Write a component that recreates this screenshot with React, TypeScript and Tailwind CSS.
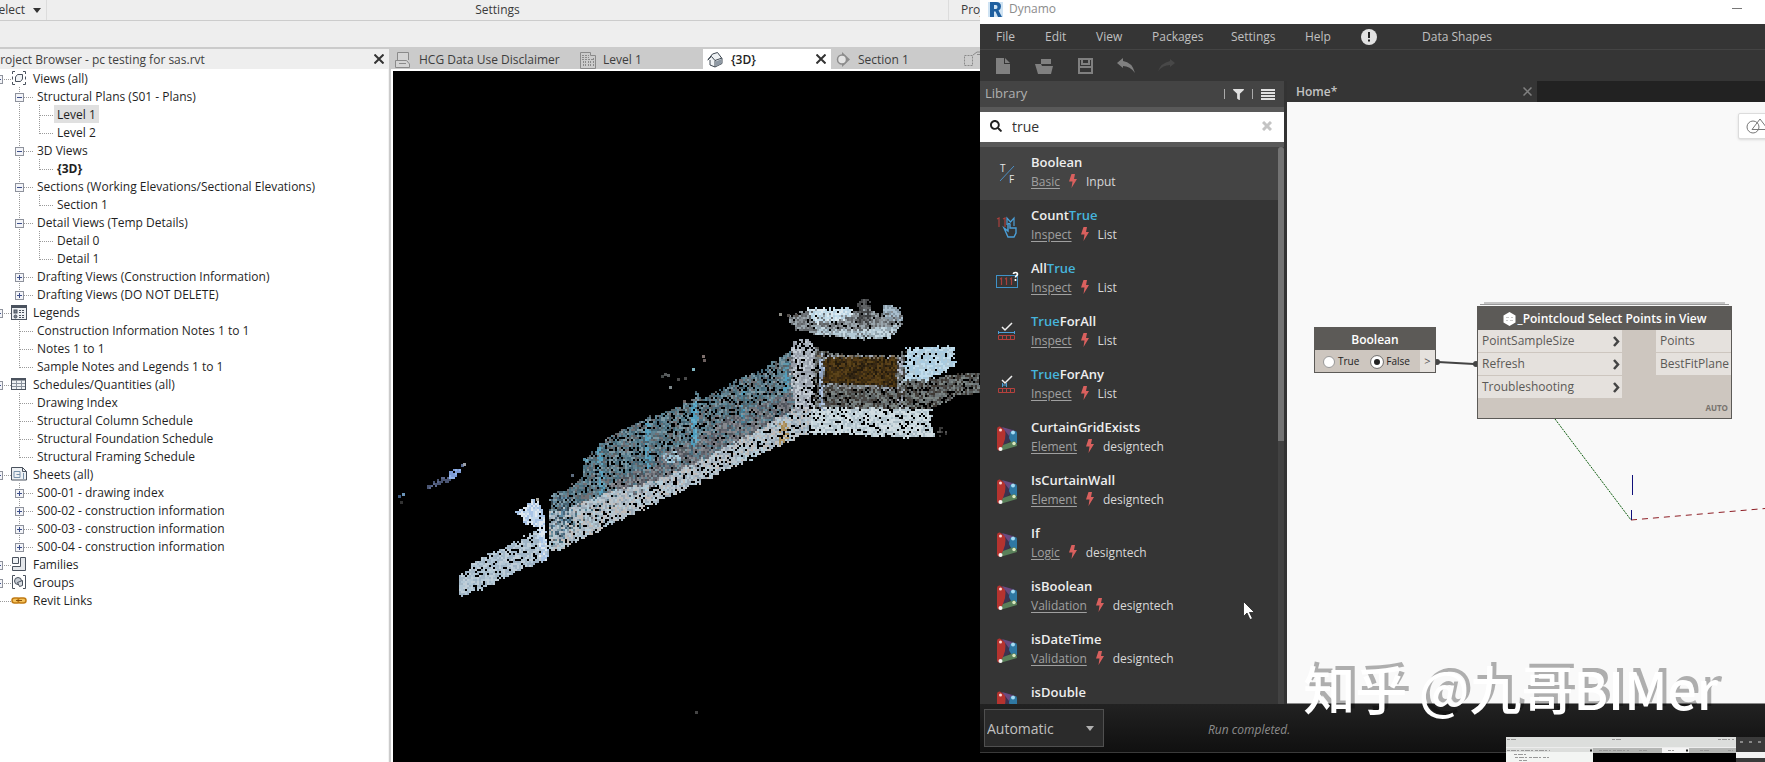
import React, { useMemo, useState } from 'react';
import { FaFilter, FaSearch } from 'react-icons/fa';

type Expander = 'open' | 'closed' | 'none';

interface TreeRow {
    label: string;
    level: 0 | 1 | 2;
    expander: Expander;
    icon?: 'views' | 'legends' | 'schedules' | 'sheets' | 'families' | 'groups' | 'links';
    bold?: boolean;
    last?: boolean;
    trunk?: boolean;
}

const treeRows: TreeRow[] = [
    { label: 'Views (all)', level: 0, expander: 'open', icon: 'views' },
    { label: 'Structural Plans (S01 - Plans)', level: 1, expander: 'open' },
    { label: 'Level 1', level: 2, expander: 'none', trunk: true },
    { label: 'Level 2', level: 2, expander: 'none', trunk: true, last: true },
    { label: '3D Views', level: 1, expander: 'open' },
    { label: '{3D}', level: 2, expander: 'none', trunk: true, last: true, bold: true },
    { label: 'Sections (Working Elevations/Sectional Elevations)', level: 1, expander: 'open' },
    { label: 'Section 1', level: 2, expander: 'none', trunk: true, last: true },
    { label: 'Detail Views (Temp Details)', level: 1, expander: 'open' },
    { label: 'Detail 0', level: 2, expander: 'none', trunk: true },
    { label: 'Detail 1', level: 2, expander: 'none', trunk: true, last: true },
    { label: 'Drafting Views (Construction Information)', level: 1, expander: 'closed' },
    { label: 'Drafting Views (DO NOT DELETE)', level: 1, expander: 'closed', last: true },
    { label: 'Legends', level: 0, expander: 'open', icon: 'legends' },
    { label: 'Construction Information Notes 1 to 1', level: 1, expander: 'none' },
    { label: 'Notes 1 to 1', level: 1, expander: 'none' },
    { label: 'Sample Notes and Legends 1 to 1', level: 1, expander: 'none', last: true },
    { label: 'Schedules/Quantities (all)', level: 0, expander: 'open', icon: 'schedules' },
    { label: 'Drawing Index', level: 1, expander: 'none' },
    { label: 'Structural Column Schedule', level: 1, expander: 'none' },
    { label: 'Structural Foundation Schedule', level: 1, expander: 'none' },
    { label: 'Structural Framing Schedule', level: 1, expander: 'none', last: true },
    { label: 'Sheets (all)', level: 0, expander: 'open', icon: 'sheets' },
    { label: 'S00-01 - drawing index', level: 1, expander: 'closed' },
    { label: 'S00-02 - construction information', level: 1, expander: 'closed' },
    { label: 'S00-03 - construction information', level: 1, expander: 'closed' },
    { label: 'S00-04 - construction information', level: 1, expander: 'closed', last: true },
    { label: 'Families', level: 0, expander: 'closed', icon: 'families' },
    { label: 'Groups', level: 0, expander: 'closed', icon: 'groups' },
    { label: 'Revit Links', level: 0, expander: 'none', icon: 'links' },
];

const TreeIcon: React.FC<{ name: TreeRow['icon'] }> = ({ name }) => {
    const common = { width: 16, height: 16, viewBox: '0 0 16 16', fill: 'none', stroke: '#4a525e', className: 'mr-[6px] shrink-0' };
    switch (name) {
        case 'views':
            return (
                <svg {...common}>
                    <path d="M4 1.500H1.500V4M12 1.500h2.500V4M1.500 6.500v3M14.500 6.500v3M4 14.500H1.500V12M12 14.500h2.500V12" />
                    <path d="M4.500 7l2-2.500h5V9l-2 2.500h-5z" fill="#f2f4f6" />
                </svg>
            );
        case 'legends':
            return (
                <svg {...common}>
                    <rect x="0.500" y="1.500" width="15" height="14" fill="#eef1f4" />
                    <path d="M0.500 2.500h15" strokeWidth="3" />
                    <path d="M8 6.500h5M8 8.500h6M8 11.500h5M8 13.500h6" strokeDasharray="2 1" />
                    <rect x="3" y="6" width="3" height="3" fill="#7b8491" />
                    <circle cx="4.500" cy="12.500" r="1.500" fill="#7b8491" />
                </svg>
            );
        case 'schedules':
            return (
                <svg {...common}>
                    <rect x="0.500" y="2.500" width="14" height="11" fill="#eef1f4" />
                    <path d="M0.500 3.500h14" strokeWidth="2" />
                    <path d="M1 7.500h13M1 10.500h13M5.500 4v9M10.500 4v9" stroke="#8b939e" />
                </svg>
            );
        case 'sheets':
            return (
                <svg {...common}>
                    <path d="M0.500 1.500h11l4 4v8.500H0.500z" fill="#eef1f4" />
                    <path d="M11.500 1.500v4h4" />
                    <path d="M3 5.500h6v6H3zM5.500 8.500H9M12.500 7v6" stroke="#7892ab" />
                </svg>
            );
        case 'families':
            return (
                <svg {...common}>
                    <path d="M1.500 1.500h6v6h-6z" fill="#eef1f4" />
                    <path d="M9.500 1.500h5v13h-13v-4h8z" fill="#e3e6ea" />
                </svg>
            );
        case 'groups':
            return (
                <svg {...common}>
                    <path d="M4 1.500H1.500v13H4M12 1.500h2.500v13H12" />
                    <circle cx="7" cy="7" r="3.500" fill="#c6ccd4" />
                    <path d="M6.500 8.500l5-2v5l-3 1z" fill="#d9dde2" />
                </svg>
            );
        default:
            return (
                <svg {...common} stroke="#c07a12">
                    <rect x="1" y="6" width="8" height="5" rx="2.500" fill="#f4c25c" strokeWidth="1.500" />
                    <rect x="7" y="6" width="8" height="5" rx="2.500" fill="#f4c25c" strokeWidth="1.500" />
                    <path d="M5 8.500h6" stroke="#8a5208" />
                </svg>
            );
    }
};

// Dotted connector lines plus the +/- box in front of a row
const TreeGuide: React.FC<{ row: TreeRow }> = ({ row }) => {
    const width = row.level === 0 ? 11 : row.level === 1 ? 35 : 54;
    const boxX = row.level === 0 ? -6 : 15;
    return (
        <svg width={width} height="18" className="shrink-0" shapeRendering="crispEdges" fill="none" stroke="#9a9a9a">
            <g strokeDasharray="1 1">
                {row.level === 0 && <path d="M0 10.500h11" />}
                {row.level === 1 && <path d={row.last ? 'M19.500 0v11M20 10.500h14' : 'M19.500 0v18M20 10.500h14'} />}
                {row.level === 2 && row.trunk && <path d="M19.500 0v18" />}
                {row.level === 2 && <path d={row.last ? 'M39.500 0v11M40 10.500h14' : 'M39.500 0v18M40 10.500h14'} />}
            </g>
            {row.expander !== 'none' && (
                <g>
                    <rect x={boxX + 0.5} y="6.500" width="8" height="8" fill="#f3f4f8" stroke="#8e929c" />
                    <path d={`M${boxX + 2} 10.500h5`} stroke="#3d4f8a" />
                    {row.expander === 'closed' && row.level === 1 && <path d={`M${boxX + 4.5} 8v5`} stroke="#3d4f8a" />}
                </g>
            )}
        </svg>
    );
};

const ProjectBrowser: React.FC = () => {
    const [selected, setSelected] = useState('Level 1');
    return (
        <aside className="flex w-[391px] shrink-0 flex-col border-r-2 border-[#cbcbcb] bg-white">
            <header className="flex h-[22px] shrink-0 items-center justify-between border-t-2 border-[#cbcbcb] bg-[#eeeeee] pr-[5px]">
                <h2 className="-ml-[7px] pt-[2px] text-[12px] whitespace-nowrap text-[#3f3f3f]">Project Browser - pc testing for sas.rvt</h2>
                <button aria-label="Close browser" className="text-[#333]">
                    <svg width="10" height="10" viewBox="0 0 10 10" stroke="currentColor" strokeWidth="2"><path d="M0.500 0.500l9 9M9.500 0.500l-9 9" /></svg>
                </button>
            </header>
            <ul className="min-h-0 flex-1 overflow-hidden border-r border-[#f3f3f3] text-[12px]">
                {treeRows.map(row => (
                    <li key={row.label} className="flex h-[18px] items-center">
                        <TreeGuide row={row} />
                        {row.icon && <TreeIcon name={row.icon} />}
                        <button
                            onClick={() => setSelected(row.label)}
                            className={`h-[18px] whitespace-nowrap leading-[17px] text-[#1f1f1f] ${row.level === 0 ? '' : row.level === 1 ? 'px-[2px]' : 'px-[3px]'} ${row.bold ? 'font-bold' : ''} ${selected === row.label ? 'bg-[#e0e0e0]' : ''}`}
                        >
                            {row.label}
                        </button>
                    </li>
                ))}
            </ul>
        </aside>
    );
};

interface Region {
    poly: number[][];
    colors: string[];
    density: number;
}

const regions: Region[] = [
    { poly: [[156, 482], [157, 424], [173, 419], [188, 406], [192, 389], [207, 372], [227, 360], [261, 345], [299, 330], [303, 319], [309, 329], [341, 311], [372, 297], [399, 278], [403, 345], [322, 386], [265, 414], [211, 440]], colors: ['#4a7080', '#5f8796', '#466271', '#6f6f74', '#7d98a3', '#5f7f8e', '#5a6468'], density: 0.83 },
    { poly: [[215, 414], [265, 387], [330, 350], [399, 320], [399, 345], [322, 388], [265, 414], [211, 438]], colors: ['#62646e', '#77787f', '#50545c', '#86898f'], density: 0.6 },
    { poly: [[156, 440], [175, 436], [220, 420], [265, 409], [322, 382], [380, 350], [403, 337], [420, 337], [420, 362], [403, 367], [341, 396], [265, 431], [211, 457], [162, 482], [156, 478]], colors: ['#a9b8c4', '#b9c3ca', '#9aa9b6', '#c0bcba', '#b4ccd8'], density: 0.82 },
    { poly: [[158, 424], [175, 422], [182, 452], [168, 470], [158, 466]], colors: ['#5f8ba5', '#48657a', '#7f9aa8', '#33434e'], density: 0.5 },
    { poly: [[66, 504], [74, 502], [79, 492], [123, 471], [144, 459], [152, 464], [156, 488], [139, 494], [74, 524], [66, 528]], colors: ['#b3c8d6', '#a5b9c8', '#c0ced8', '#9fb4c6'], density: 0.88 },
    { poly: [[122, 440], [131, 436], [142, 427], [150, 439], [155, 491], [148, 491], [144, 456], [131, 452]], colors: ['#a9c4e6', '#c3d8ec', '#dfe8f0'], density: 0.94 },
    { poly: [[420, 276], [437, 282], [506, 286], [512, 276], [514, 309], [548, 306], [562, 303], [587, 302], [587, 322], [563, 324], [552, 331], [537, 338], [422, 338]], colors: ['#5c6262', '#4a4846', '#6e7678', '#3d3833', '#7d8684'], density: 0.86 },
    { poly: [[431, 286], [504, 286], [504, 316], [431, 312]], colors: ['#45320f', '#543b16', '#3a2a14', '#241b0d', '#5b431a', '#332612'], density: 1 },
    { poly: [[399, 271], [404, 268], [416, 268], [422, 276], [420, 339], [403, 339], [397, 309]], colors: ['#a7b0ba', '#c4ccd4', '#949aa5'], density: 0.82 },
    { poly: [[418, 337], [538, 337], [538, 352], [544, 367], [449, 364], [418, 362]], colors: ['#c5d5dc', '#aebfc8', '#d2dde2'], density: 0.84 },
    { poly: [[513, 277], [561, 275], [562, 295], [532, 310], [511, 309]], colors: ['#a9cbe0', '#c0dcec', '#b1c9d6'], density: 0.94 },
    { poly: [[395, 247], [414, 239], [429, 241], [460, 241], [466, 240], [471, 227], [477, 240], [490, 243], [494, 233], [508, 241], [510, 252], [498, 265], [468, 268], [422, 264], [403, 259]], colors: ['#70757a', '#8a9196', '#606467', '#9aa6ad'], density: 0.9 },
    { poly: [[414, 238], [460, 237], [458, 245], [448, 249], [422, 252]], colors: ['#c3dcea', '#b5cfdf', '#dbe8ef'], density: 0.93 },
    { poly: [[422, 256], [470, 260], [508, 254], [497, 266], [468, 268], [424, 263]], colors: ['#b4cad6', '#c7d9e2', '#93a5af'], density: 0.88 },
    { poly: [[465, 231], [471, 226], [477, 230], [478, 252], [465, 252]], colors: ['#4a4c4e', '#5f6264', '#3b3d3f'], density: 0.8 },
    { poly: [[489, 236], [494, 233], [508, 239], [508, 250], [492, 249]], colors: ['#a9bfce', '#8699a6'], density: 0.8 },
    { poly: [[33, 417], [48, 407], [60, 405], [58, 409], [42, 416]], colors: ['#4a5573', '#5b688c'], density: 0.95 },
    { poly: [[54, 405], [60, 399], [68, 398], [66, 405], [58, 408]], colors: ['#7d9bd4', '#93b4e8'], density: 0.95 },
    { poly: [[385, 352], [395, 349], [397, 366], [387, 376]], colors: ['#a58a55', '#b59a68'], density: 0.6 },
    { poly: [[268, 382], [284, 380], [290, 390], [276, 394]], colors: ['#8fb6cc', '#a9cbdc'], density: 0.5 },
    { poly: [[204, 376], [209, 376], [212, 424], [207, 424]], colors: ['#4f9dbd', '#5fa3bd'], density: 0.65 },
    { poly: [[252, 352], [257, 352], [258, 398], [253, 398]], colors: ['#4f9dbd', '#5fa3bd'], density: 0.65 },
    { poly: [[298, 334], [304, 330], [304, 376], [300, 376]], colors: ['#4f9dbd', '#66aecb'], density: 0.85 },
    { poly: [[347, 320], [351, 320], [351, 352], [347, 352]], colors: ['#4f9dbd', '#487f95'], density: 0.6 },
    { poly: [[391, 286], [395, 286], [395, 322], [391, 322]], colors: ['#4f9dbd', '#5f99ae'], density: 0.6 },
    { poly: [[426, 282], [430, 282], [430, 338], [426, 338]], colors: ['#b3c6e0', '#8fa3c0'], density: 0.85 },
    { poly: [[505, 284], [509, 284], [509, 336], [505, 336]], colors: ['#aeb6c4', '#7c828c'], density: 0.6 },
    { poly: [[424, 284], [504, 285], [504, 288], [424, 286]], colors: ['#a3adba', '#7d7160'], density: 0.6 },
    { poly: [[434, 313], [512, 317], [512, 320], [434, 316]], colors: ['#9aa5b0', '#7d7f80'], density: 0.6 },
    { poly: [[545, 356], [553, 356], [553, 364], [545, 366]], colors: ['#3a3a3a', '#555555'], density: 0.6 },
];

const strays = [
    [386, 242, '#8d8d86'], [394, 243, '#54504d'], [402, 243, '#54504d'], [309, 284, '#7d6f6c'], [310, 288, '#6b5f5e'], [299, 297, '#7fb4c0'],
    [271, 302, '#55595a'], [268, 304, '#454a4a'], [274, 303, '#5b6061'], [284, 307, '#4a4a4a'], [291, 306, '#4a4a4a'], [276, 315, '#7f898c'],
    [68, 393, '#5a6d96'], [70, 392, '#9a9fa6'], [5, 424, '#3e5a80'], [9, 422, '#6b94b8'], [7, 430, '#333333'], [178, 403, '#5f6e80'],
    [192, 388, '#6cacc4'], [190, 387, '#5c93aa'], [290, 329, '#716868'], [143, 427, '#a9a9a0'], [302, 640, '#444444'],
] as const;

const inside = (x: number, y: number, poly: number[][]) => {
    let hit = false;
    for (let i = 0, j = poly.length - 1; i < poly.length; j = i++) {
        const [xi, yi] = poly[i];
        const [xj, yj] = poly[j];
        if (yi > y !== yj > y && x < ((xj - xi) * (y - yi)) / (yj - yi) + xi) hit = !hit;
    }
    return hit;
};

// Scatters points over each region on a 2px grid, later regions cover earlier ones
const buildCloud = () => {
    let seed = 7;
    const rand = () => {
        seed = (seed * 1664525 + 1013904223) % 4294967296;
        return seed / 4294967296;
    };
    const cells = new Map<string, string>();
    regions.forEach(({ poly, colors, density }) => {
        const xs = poly.map(p => p[0]);
        const ys = poly.map(p => p[1]);
        for (let y = Math.floor(Math.min(...ys) / 2) * 2; y <= Math.max(...ys); y += 2) {
            for (let x = Math.floor(Math.min(...xs) / 2) * 2; x <= Math.max(...xs); x += 2) {
                const jx = x + 1 + (rand() - 0.5) * 3;
                const jy = y + 1 + (rand() - 0.5) * 3;
                if (rand() < density && inside(jx, jy, poly)) {
                    cells.set(`${x} ${y}`, colors[Math.floor(rand() * colors.length)]);
                }
            }
        }
    });
    const paths: Record<string, string> = {};
    cells.forEach((color, at) => {
        paths[color] = (paths[color] ?? '') + `M${at}h2v2h-2z`;
    });
    return Object.entries(paths);
};

const PointCloud: React.FC = () => {
    const paths = useMemo(buildCloud, []);
    return (
        <svg width="587" height="690" shapeRendering="crispEdges" role="img" aria-label="Point cloud">
            {paths.map(([color, d]) => <path key={color} d={d} fill={color} />)}
            {strays.map(([x, y, color]) => <rect key={`${x}-${y}`} x={x} y={y} width="3" height="3" fill={color} />)}
        </svg>
    );
};

const ViewTabs: React.FC = () => (
    <nav className="flex h-[22px] shrink-0 items-stretch overflow-hidden bg-[#cbcbcb] pt-[2px] text-[12px] whitespace-nowrap text-[#3d3d3d]">
        <button className="flex w-[185px] shrink-0 items-center gap-[8px] pt-[2px] pl-[4px]">
            <svg width="16" height="17" viewBox="0 0 16 17" fill="none" stroke="#8a8a8a"><path d="M2.500 8V0.500h11V8M0.500 8.500h11l3 3.500v3.500H0.500zM4 11.500h7" fill="#d4d4d4" /></svg>
            HCG Data Use Disclaimer
        </button>
        <button className="flex w-[127px] shrink-0 items-center gap-[7px] pt-[2px] pl-[4px]">
            <svg width="16" height="17" viewBox="0 0 16 17" fill="none" stroke="#8a8a8a"><path d="M0.500 0.500h10v3h5v13H0.500z" /><path d="M2 3.500h7M2 5.500h7M2 7.500h12M3.500 9v6M5.500 9v6M8.500 9v6M10.500 9v6M13.500 6v9" strokeDasharray="2 1" /></svg>
            Level 1
        </button>
        <div className="flex w-[128px] shrink-0 items-center justify-between bg-white pr-[5px] pl-[4px]">
            <button className="flex items-center gap-[8px] pt-[2px] font-semibold text-[#222]">
                <svg width="16" height="16" viewBox="0 0 16 16" fill="none" stroke="#3f4852"><path d="M1.500 8V7l4-5 5-1.500 4.500 6v5l-7 3.500-5-2V8" fill="#eef1f3" /><path d="M0.500 8l4-3.500L8 8.500V15M8 8.500L15 6" /><path d="M8.500 9.500l6-2.500v4.500l-6 3z" fill="#8d98a3" stroke="none" /></svg>
                {'{3D}'}
            </button>
            <button aria-label="Close view" className="text-[#333]">
                <svg width="10" height="10" viewBox="0 0 10 10" stroke="currentColor" strokeWidth="2"><path d="M0.500 0.500l9 9M9.500 0.500l-9 9" /></svg>
            </button>
        </div>
        <button className="flex w-[128px] shrink-0 items-center gap-[7px] pt-[2px] pl-[5px]">
            <svg width="15" height="16" viewBox="0 0 15 16"><path d="M6 0l8 7.500L6 15z" fill="#8c8c8c" /><circle cx="6" cy="7.500" r="4.500" fill="#e4e4e4" stroke="#8c8c8c" strokeWidth="1.500" /></svg>
            Section 1
        </button>
        <button aria-label="Next view" className="flex shrink-0 items-center pl-[5px]">
            <svg width="20" height="16" viewBox="0 0 20 16" fill="none" stroke="#8a8a8a"><rect x="0.500" y="4.500" width="8" height="10" strokeDasharray="2 1" /><path d="M9 4l4-3h6M13 3.500h5" /></svg>
        </button>
    </nav>
);

const RevitWindow: React.FC = () => (
    <div className="flex min-w-0 flex-col overflow-hidden bg-[#eeeeee] font-['Open_Sans','Noto_Sans',sans-serif]">
        <div className="flex h-[21px] shrink-0 border-b border-[#cccccc] text-[12px] leading-[20px] text-[#3a3a3a]">
            <button className="flex w-[47px] shrink-0 items-center gap-[8px] border-r border-[#dcdcdc]">
                <span className="-ml-[8px]">Select</span>
                <svg width="8" height="5" viewBox="0 0 8 5" className="shrink-0"><path d="M0 0h8L4 5z" fill="#333" /></svg>
            </button>
            <div className="flex-1 text-center">Settings</div>
            <div className="w-[32px] shrink-0 overflow-hidden border-l border-[#dcdcdc] pl-[12px]">Proj</div>
        </div>
        <div className="h-[26px] shrink-0" />
        <div className="flex min-h-0 flex-1">
            <ProjectBrowser />
            <main className="flex min-w-0 flex-1 flex-col">
                <ViewTabs />
                <div className="min-h-0 flex-1 overflow-hidden border-t-2 border-l-2 border-white bg-black">
                    <PointCloud />
                </div>
            </main>
        </div>
    </div>
);

type NodeIconName = 'bool' | 'count' | 'all' | 'forAll' | 'forAny' | 'package';

interface LibraryItem {
    name: [string, string, string];
    category: string;
    group: string;
    icon: NodeIconName;
}

// name is split as [before match, match, after match]
const libraryItems: LibraryItem[] = [
    { name: ['Boolean', '', ''], category: 'Basic', group: 'Input', icon: 'bool' },
    { name: ['Count', 'True', ''], category: 'Inspect', group: 'List', icon: 'count' },
    { name: ['All', 'True', ''], category: 'Inspect', group: 'List', icon: 'all' },
    { name: ['', 'True', 'ForAll'], category: 'Inspect', group: 'List', icon: 'forAll' },
    { name: ['', 'True', 'ForAny'], category: 'Inspect', group: 'List', icon: 'forAny' },
    { name: ['CurtainGridExists', '', ''], category: 'Element', group: 'designtech', icon: 'package' },
    { name: ['IsCurtainWall', '', ''], category: 'Element', group: 'designtech', icon: 'package' },
    { name: ['If', '', ''], category: 'Logic', group: 'designtech', icon: 'package' },
    { name: ['isBoolean', '', ''], category: 'Validation', group: 'designtech', icon: 'package' },
    { name: ['isDateTime', '', ''], category: 'Validation', group: 'designtech', icon: 'package' },
    { name: ['isDouble', '', ''], category: 'Validation', group: 'designtech', icon: 'package' },
];

const NodeIcon: React.FC<{ name: NodeIconName }> = ({ name }) => {
    const common = { width: 26, height: 28, viewBox: '0 0 26 28', fill: 'none', className: 'shrink-0' };
    switch (name) {
        case 'bool':
            return (
                <svg {...common}>
                    <text x="6" y="12" fontSize="10" fill="#e6e6e6">T</text>
                    <text x="15" y="23" fontSize="10" fill="#e6e6e6">F</text>
                    <path d="M20 6L6 21" stroke="#4d8fc4" />
                </svg>
            );
        case 'count':
            return (
                <svg {...common}>
                    <path d="M3 6l2-1v9M9 6l2-1v9" stroke="#a8403c" strokeWidth="1.200" />
                    <path d="M13 12V5l3.500 4L20 5v8" stroke="#4b9fd8" strokeWidth="1.200" />
                    <path d="M10 15l4 3v-7q1-1 2 0v4h6v5l-2 4h-6z" stroke="#4b9fd8" strokeWidth="1.400" fill="#353535" />
                </svg>
            );
        case 'all':
            return (
                <svg {...common}>
                    <rect x="2.500" y="9.500" width="21" height="12" stroke="#3f92c8" />
                    <path d="M6 13l1.500-1v7M11 13l1.500-1v7M16 13l1.500-1v7" stroke="#a8403c" strokeWidth="1.200" />
                    <path d="M19.500 8c0-2 4-2 4 0 0 1.800-2 1.500-2 3.500M21.500 13v2" stroke="#fff" strokeWidth="1.700" />
                </svg>
            );
        case 'forAll':
        case 'forAny':
            return (
                <svg {...common}>
                    <path d="M8 8l3 3 7-7" stroke="#f0f0f0" strokeWidth="1.500" />
                    <path d={name === 'forAll' ? 'M4.500 12v3M20.500 12v3M4 13.500h17' : 'M8.500 11v4M12.500 11v4M8 13h5'} stroke="#4b9fd8" />
                    <path d="M4.500 16.500h16v4h-16zM8.500 16.500v4M12.500 16.500v4M16.500 16.500v4" stroke="#b5413d" />
                </svg>
            );
        default:
            return (
                <svg {...common}>
                    <path d="M4 2l17 3-6 12-9 6z" fill="#3c3350" />
                    <path d="M3 4q0-3 3-2.500l5 3.500q1 4 0 9l-4 12q-4 0-4-3z" fill="#b5332f" />
                    <path d="M8 2l10 3-3 6z" fill="#6b4a80" />
                    <path d="M16 7l6-1q1 1 1 3v9l-5 1-3-6z" fill="#2f78a3" />
                    <path d="M6 26l3-6 11-4q3 1 3 5z" fill="#5a805a" />
                    <circle cx="6.500" cy="5" r="1.500" fill="#ffd9d4" />
                    <circle cx="19" cy="7.500" r="2" fill="#a5dcf5" />
                    <circle cx="20" cy="18.500" r="1.700" fill="#dbe8c0" />
                    <circle cx="6.500" cy="24" r="2" fill="#f4f4f4" />
                </svg>
            );
    }
};

const Library: React.FC = () => {
    const [query, setQuery] = useState('true');
    return (
        <aside className="flex w-[307px] shrink-0 flex-col border-r-[3px] border-[#333] bg-[#353535]">
            <div className="flex h-[26px] shrink-0 items-center justify-between bg-[#444444] pr-[9px] pl-[5px]">
                <h2 className="text-[13px] text-[#b0b0b0]">Library</h2>
                <div className="flex items-center gap-[8px] text-[#e0e0e0]">
                    <span className="h-[10px] w-px bg-[#aaa]" />
                    <button aria-label="Filter"><FaFilter size={11} /></button>
                    <span className="h-[10px] w-px bg-[#aaa]" />
                    <button aria-label="List view">
                        <svg width="14" height="11" viewBox="0 0 14 11" fill="currentColor" shapeRendering="crispEdges"><path d="M0 0h14v2H0zM0 3h14v2H0zM0 6h14v2H0zM0 9h14v2H0z" /></svg>
                    </button>
                </div>
            </div>
            <div className="shrink-0 border-y-[5px] border-[#595959]">
                <label className="flex h-[30px] items-center bg-white pr-[12px] pb-[2px] pl-[10px]">
                    <FaSearch size={12} className="text-[#222]" />
                    <input
                        aria-label="Search library"
                        value={query}
                        onChange={e => setQuery(e.target.value)}
                        className="ml-[10px] min-w-0 flex-1 text-[14px] text-[#333] outline-none"
                    />
                    <button aria-label="Clear search" onClick={() => setQuery('')}>
                        <svg width="10" height="10" viewBox="0 0 10 10" stroke="#c4c4c4" strokeWidth="3"><path d="M1 1l8 8M9 1L1 9" /></svg>
                    </button>
                </label>
            </div>
            <div className="flex min-h-0 flex-1">
                <ul className="min-w-0 flex-1 overflow-hidden">
                    {libraryItems.map((item, i) => (
                        <li key={item.name.join('')} className={`flex h-[53px] items-center gap-[11px] pl-[14px] ${i === 0 ? 'bg-[#444444]' : ''}`}>
                            <NodeIcon name={item.icon} />
                            <div className="pb-[4px]">
                                <button className="block text-[13px] leading-[19px] font-semibold text-[#eeeeee]">
                                    {item.name[0]}<span className="text-[#46b4dc]">{item.name[1]}</span>{item.name[2]}
                                </button>
                                <div className="flex items-center gap-[9px] text-[12px] leading-[19px] text-[#d8d8d8]">
                                    <a href="#category" className="text-[#a0a0a0] underline underline-offset-2">{item.category}</a>
                                    <svg width="8" height="14" viewBox="0 0 8 14"><path d="M2.500 0h3.500L5 5h3L2.500 14l1-6.500H0z" fill="#d9605e" /></svg>
                                    <span>{item.group}</span>
                                </div>
                            </div>
                        </li>
                    ))}
                </ul>
                <div className="w-[6px] shrink-0 bg-[#424242]">
                    <div className="h-[294px] rounded-t-[3px] bg-[#737373]" />
                </div>
            </div>
        </aside>
    );
};

const Port: React.FC<{ label: string; arrow?: boolean }> = ({ label, arrow }) => (
    <li className="flex h-[22px] items-center justify-between bg-[#e5e1dd] pr-[2px] pl-[4px] text-[12px] whitespace-nowrap text-[#5b5956]">
        {label}
        {arrow && <svg width="7" height="11" viewBox="0 0 7 11" fill="none" stroke="#444" strokeWidth="2.500"><path d="M1 1l4 4.500L1 10" /></svg>}
    </li>
);

const Workspace: React.FC = () => {
    const [value, setValue] = useState(false);
    return (
        <div className="relative min-h-0 flex-1 overflow-hidden border-b border-[#8a8a8a] bg-[#f9f9f9]">
            <svg className="absolute top-0 left-0 h-full w-full" fill="none">
                <path d="M268 317L344 418" stroke="#0d5c0d" strokeDasharray="2 1" />
                <path d="M344 418L484 406" stroke="#8e1f26" strokeDasharray="6 5" />
                <path d="M345 373h1v20h-1zM344 408h1v10h-1z" fill="#10107a" />
                <path d="M151 260L187 262" stroke="#444" strokeWidth="2" />
                <circle cx="150" cy="260" r="3" fill="#444" />
                <circle cx="189" cy="262" r="3" fill="#444" />
            </svg>

            <button aria-label="Geometry view" className="absolute top-[11px] left-[451px] flex h-[26px] w-[60px] items-center rounded-[2px] border border-[#dcdcdc] bg-white pl-[7px] shadow-sm">
                <svg width="32" height="16" viewBox="0 0 32 16" fill="none" stroke="#777"><circle cx="7" cy="9" r="6" /><path d="M6 11.500h16L14 1z" /></svg>
            </button>

            <section className="absolute top-[225px] left-[27px] w-[122px] border border-[#5c5a57] bg-[#cdc6bf]">
                <h3 className="flex h-[22px] items-center justify-center bg-[#5c5a57] pt-[2px] text-[12px] font-semibold text-white">Boolean</h3>
                <div className="flex h-[22px] items-center text-[10px] text-[#222]">
                    <label className="ml-[8px] flex items-center gap-[3px] pt-px">
                        <input type="radio" name="bool" checked={value} onChange={() => setValue(true)} className="h-[12px] w-[12px] appearance-none rounded-full border border-[#999] bg-white checked:border-[3px] checked:border-white checked:bg-[#222] checked:outline checked:outline-[#777]" />
                        True
                    </label>
                    <label className="ml-[12px] flex items-center gap-[3px] pt-px">
                        <input type="radio" name="bool" checked={!value} onChange={() => setValue(false)} className="h-[12px] w-[12px] appearance-none rounded-full border border-[#999] bg-white checked:border-[3px] checked:border-white checked:bg-[#222] checked:outline checked:outline-[#777]" />
                        False
                    </label>
                    <span className="ml-auto flex h-[22px] w-[15px] items-center justify-center bg-[#e5e1dd] pt-px text-[11px] text-[#555]">&gt;</span>
                </div>
            </section>

            <div className="absolute top-[200px] left-[190px] w-[255px]">
                <div className="mx-[7px] h-[2px] bg-[#c4c4c4]" />
                <div className="mx-[3px] h-[2px] border-t border-[#999] bg-[#f9f9f9]" />
                <section className="border border-[#5c5a57] bg-[#cdc6bf]">
                    <h3 className="flex h-[23px] items-center justify-center gap-[2px] bg-[#5c5a57] text-[12px] font-semibold text-white">
                        <svg width="13" height="14" viewBox="0 0 13 14"><path d="M6.500 0l6 3.500v7l-6 3.500-6-3.500v-7z" fill="#fff" /><path d="M3 5.500h3M8 5.500h2M3 8.500h2M7 8.500h3" stroke="#c8c8c8" /></svg>
                        _Pointcloud Select Points in View
                    </h3>
                    <div className="flex h-[68px] items-start justify-between">
                        <ul className="flex w-[144px] flex-col gap-px">
                            <Port label="PointSampleSize" arrow />
                            <Port label="Refresh" arrow />
                            <Port label="Troubleshooting" arrow />
                        </ul>
                        <ul className="flex w-[75px] flex-col gap-px">
                            <Port label="Points" />
                            <Port label="BestFitPlane" />
                        </ul>
                    </div>
                    <div className="flex h-[20px] items-center justify-end pr-[3px] text-[8px] font-bold text-[#77726d]">AUTO</div>
                </section>
            </div>
        </div>
    );
};

const Toolbar: React.FC = () => (
    <div className="flex h-[32px] shrink-0 items-center border-t border-[#444] bg-[#353535] pl-[16px] text-[#808080]">
        <button aria-label="New" className="w-[39px]">
            <svg width="15" height="16" viewBox="0 0 15 16" fill="currentColor"><path d="M0 0h8v6h6v10H0z" /><path d="M9 0l5 5H9z" /></svg>
        </button>
        <button aria-label="Open" className="w-[43px]">
            <svg width="19" height="16" viewBox="0 0 19 16" fill="currentColor"><path d="M6 1h10v5H6z" /><path d="M0 6h6l1 2h11l-2 8H3z" /></svg>
        </button>
        <button aria-label="Save" className="w-[39px]">
            <svg width="15" height="16" viewBox="0 0 15 16" fill="none" stroke="currentColor" strokeWidth="2"><path d="M1 1h13v14H1zM4 1v5h7V1M1 9h13" /></svg>
        </button>
        <button aria-label="Undo" className="w-[41px]">
            <svg width="18" height="15" viewBox="0 0 18 15" fill="currentColor"><path d="M6 0v3q9 1 12 12Q13 8 6 8v2L0 5z" /></svg>
        </button>
        <button aria-label="Redo" className="text-[#484848]">
            <svg width="18" height="15" viewBox="0 0 18 15" fill="currentColor"><path d="M12 1v2Q3 5 0 13q5-6 12-6v2l5-4z" /></svg>
        </button>
    </div>
);

// Small preview strip of the other desktop in the corner
const DesktopPreview: React.FC = () => (
    <svg className="absolute right-0 bottom-0" width="259" height="25" viewBox="0 0 259 25">
        <rect width="230" height="25" fill="#dcdedc" />
        <path d="M0 10.500h230" stroke="#ededed" />
        <rect x="87" y="11" width="143" height="5" fill="#b4b6b4" />
        <rect x="156" y="11" width="27" height="5" fill="#f4f4f4" />
        <rect x="87" y="16" width="143" height="9" fill="#000" />
        <rect x="0" y="15" width="87" height="10" fill="#f3f5f3" />
        <rect x="230" width="29" height="25" fill="#3a3a3a" />
        <rect x="230" y="15" width="29" height="6" fill="#f2f2f2" />
        <g stroke="#999" strokeDasharray="3 1 5 1 2 2">
            <path d="M1 2.500h9M106 2.500h9M212 2.500h16M1 13.500h43M93 13.500h30M133 13.500h8M162 13.500h6M194 13.500h10M222 13.500h5M8 17.500h12M9 20.500h34M13 23.500h8" />
        </g>
        <path d="M234 5h3M243 5h3M252 5h3" stroke="#888" strokeWidth="2" />
        <path d="M84 13.500h2M180 13.500h2" stroke="#222" strokeWidth="2" />
    </svg>
);

const menuButton = 'text-left whitespace-nowrap';

const DynamoWindow: React.FC = () => (
    <div className="relative flex min-w-0 flex-col overflow-hidden bg-black pb-[9px] font-['Open_Sans','Noto_Sans',sans-serif]">
        <header className="flex h-[24px] shrink-0 items-start justify-between bg-white pr-[23px] pl-[8px]">
            <div className="flex items-center gap-[6px] text-[12px] leading-[18px] text-[#8c8c8c]">
                <svg width="15" height="15" viewBox="0 0 15 15"><rect x="0" y="0" width="15" height="15" fill="#cfe3f3" /><path d="M2 0h6q5 0 5 4.500 0 3-2.500 4L14 15h-4L7.500 9.500H6V15H2z" fill="#1f5f9f" /><path d="M6 3v4h2q1.500 0 1.500-2T8 3z" fill="#cfe3f3" /></svg>
                Dynamo
            </div>
            <button aria-label="Minimize" className="mt-[8px] h-px w-[10px] bg-[#777]" />
        </header>
        <nav className="flex h-[25px] shrink-0 items-center bg-[#353535] pt-px pl-[16px] text-[12px] text-[#c0c0c0]">
            <button className={`${menuButton} w-[49px]`}>File</button>
            <button className={`${menuButton} w-[51px]`}>Edit</button>
            <button className={`${menuButton} w-[56px]`}>View</button>
            <button className={`${menuButton} w-[79px]`}>Packages</button>
            <button className={`${menuButton} w-[74px]`}>Settings</button>
            <button className={`${menuButton} w-[56px]`}>Help</button>
            <button aria-label="Notifications" className="w-[61px]">
                <svg width="16" height="16" viewBox="0 0 16 16"><circle cx="8" cy="8" r="8" fill="#e2e2e2" /><path d="M8 3v6M8 10.500v2" stroke="#222" strokeWidth="2" /></svg>
            </button>
            <button className={menuButton}>Data Shapes</button>
        </nav>
        <Toolbar />
        <div className="flex min-h-0 flex-1">
            <Library />
            <div className="flex min-w-0 flex-1 flex-col">
                <div className="flex h-[21px] shrink-0 bg-[#222222]">
                    <div className="flex w-[250px] items-center justify-between bg-[#353535] pr-[5px] pl-[9px]">
                        <button className="text-[12px] font-semibold text-[#c4c4c4]">Home*</button>
                        <button aria-label="Close workspace">
                            <svg width="9" height="9" viewBox="0 0 9 9" stroke="#808080" strokeWidth="1.500"><path d="M0.500 0.500l8 8M8.500 0.500l-8 8" /></svg>
                        </button>
                    </div>
                </div>
                <Workspace />
            </div>
        </div>
        <footer className="flex h-[49px] shrink-0 items-center border-b border-[#3a3a3a] bg-gradient-to-b from-[#222222] to-[#101010] pl-[4px]">
            <div className="relative">
                <select aria-label="Run mode" className="h-[38px] w-[120px] appearance-none border border-[#505050] bg-[#2b2b2b] pl-[2px] text-[14px] text-[#c0c0c0]">
                    <option>Automatic</option>
                    <option>Manual</option>
                </select>
                <svg width="8" height="5" viewBox="0 0 8 5" className="pointer-events-none absolute top-[17px] right-[10px]"><path d="M0 0h8L4 5z" fill="#b0b0b0" /></svg>
            </div>
            <p className="ml-[104px] pt-[4px] text-[12px] text-[#8c8c8c] italic">Run completed.</p>
        </footer>
        <svg width="12" height="19" viewBox="0 0 12 19" className="absolute top-[601px] left-[263px]"><path d="M0.500 0.500v15l3.500-3.500 3 6.500 2.500-1-3-6h5z" fill="#fff" stroke="#222" strokeWidth="0.800" /></svg>
        <p className="absolute right-[47px] bottom-[36px] font-['Noto_Sans_CJK_SC',sans-serif] text-[52px] leading-[76px] font-medium whitespace-nowrap text-white [text-shadow:4px_-4px_0_rgba(0,0,0,0.3)]">知乎 @九哥BIMer</p>
        <DesktopPreview />
    </div>
);

const App: React.FC = () => (
    <div className="grid h-screen grid-cols-[minmax(0,980fr)_minmax(0,785fr)] overflow-hidden bg-black">
        <RevitWindow />
        <DynamoWindow />
    </div>
);

export default App;
